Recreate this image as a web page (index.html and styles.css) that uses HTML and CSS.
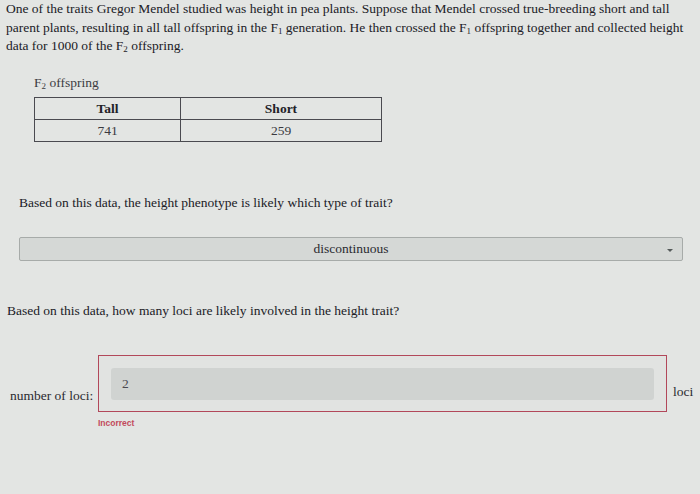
FILE: index.html
```html
<!DOCTYPE html>
<html>
<head>
<meta charset="utf-8">
<link rel="stylesheet" href="styles.css">
</head>
<body>
<main class="page">
  <p class="intro">One of the traits Gregor Mendel studied was height in pea plants. Suppose that Mendel crossed true-breeding short and tall parent plants, resulting in all tall offspring in the F<sub>1</sub> generation. He then crossed the F<sub>1</sub> offspring together and collected height data for 1000 of the F<sub>2</sub> offspring.</p>

  <div class="caption">F<sub>2</sub> offspring</div>
  <table class="data">
    <tr><th class="c1">Tall</th><th class="c2">Short</th></tr>
    <tr><td>741</td><td>259</td></tr>
  </table>

  <p class="q1">Based on this data, the height phenotype is likely which type of trait?</p>
  <div class="select">
    <span class="select-text">discontinuous</span>
    <span class="caret"></span>
  </div>

  <p class="q2">Based on this data, how many loci are likely involved in the height trait?</p>
  <div class="answer-row">
    <span class="label">number of loci:</span>
    <div class="answer-col">
      <div class="answer-box">
        <div class="input">2</div>
      </div>
      <div class="incorrect">Incorrect</div>
    </div>
    <span class="unit">loci</span>
  </div>
</main>
</body>
</html>
```
FILE: styles.css
```css
html, body {
  margin: 0;
  padding: 0;
  background: #e3e5e3;
}
body {
  width: 700px;
  height: 494px;
  overflow: hidden;
  font-family: "Liberation Serif", "Times New Roman", serif;
  font-size: 13.5px;
  color: #202026;
}
.page {
  display: flex;
  flex-direction: column;
  align-items: flex-start;
}
sub {
  font-size: 9px;
  line-height: 9px;
  vertical-align: -2px;
}
.intro {
  margin: 0 0 0 6px;
  width: 688px;
  line-height: 18.5px;
}
.caption {
  margin: 18px 0 0 34px;
  line-height: 18px;
  color: #3c3c42;
}
.data {
  margin: 5.5px 0 0 34px;
  border-collapse: collapse;
  border: 1.5px solid #3e3e44;
}
.data th, .data td {
  border: 1px solid #4a4a50;
  text-align: center;
  padding: 0;
  font-size: 13.5px;
}
.data th {
  height: 21px;
  font-weight: bold;
  color: #222228;
}
.data td {
  height: 21px;
  color: #3a3a40;
}
.data .c1 { width: 145px; }
.data .c2 { width: 200px; }
.q1 {
  margin: 52px 0 0 19px;
  line-height: 18px;
}
.select {
  margin: 25px 0 0 19px;
  width: 662px;
  height: 22px;
  border: 1px solid #a7aba9;
  border-radius: 2px;
  background: #d5d8d6;
  display: flex;
  align-items: center;
  justify-content: center;
  position: relative;
}
.select-text {
  color: #2a2a30;
}
.caret {
  position: absolute;
  right: 9px;
  top: 11px;
  width: 0;
  height: 0;
  border-left: 3px solid transparent;
  border-right: 3px solid transparent;
  border-top: 3px solid #555a5a;
}
.q2 {
  margin: 41px 0 0 7px;
  line-height: 18px;
}
.answer-row {
  margin: 35px 0 0 10px;
  display: flex;
  align-items: flex-start;
}
.label {
  margin-top: 33px;
  width: 88px;
  line-height: 16px;
  color: #2a2a30;
}
.answer-col {
  display: flex;
  flex-direction: column;
}
.answer-box {
  width: 543px;
  height: 31px;
  padding: 12px;
  border: 1.5px solid #b2485a;
  background: #e1e3e1;
}
.input {
  height: 32px;
  background: #d0d3d1;
  border-radius: 3px;
  padding-left: 11px;
  line-height: 32px;
  font-size: 13.5px;
  color: #4a4a50;
}
.incorrect {
  margin-top: 6px;
  font-family: "Liberation Sans", Arial, sans-serif;
  font-size: 8.5px;
  font-weight: bold;
  line-height: 10px;
  color: #c24a5c;
}
.unit {
  margin: 29px 0 0 6px;
  line-height: 16px;
  color: #2a2a30;
}
```
